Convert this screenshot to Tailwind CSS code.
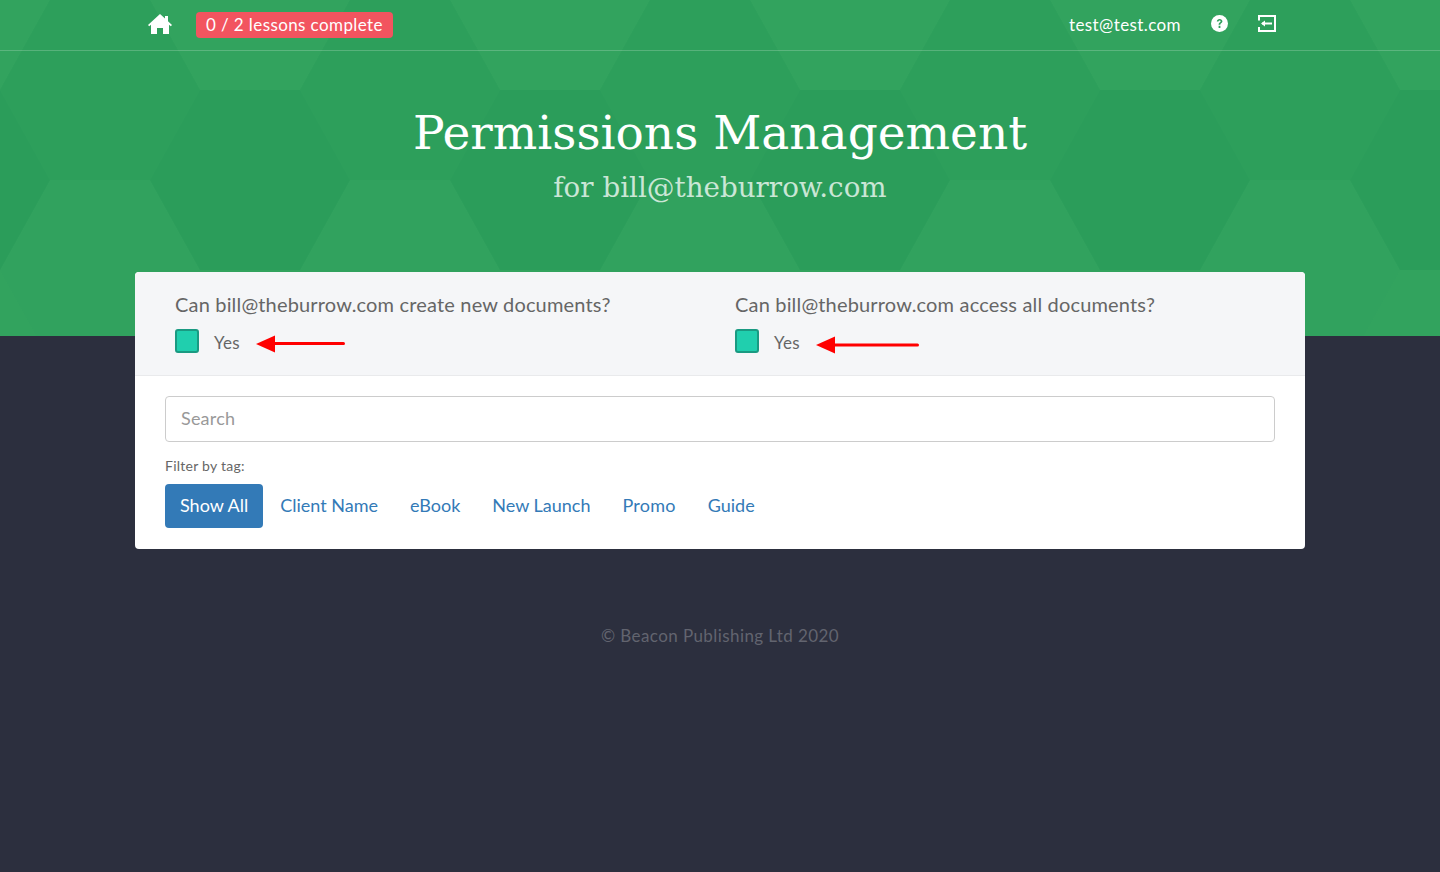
<!DOCTYPE html>
<html lang="en">
<head>
    <title>Permissions Management</title>
    <script src="https://cdn.jsdelivr.net/npm/@tailwindcss/browser@4"></script>
    <meta name="viewport" content="width=device-width, initial-scale=1.0">
</head>

<body class="bg-[#2c2f3e] min-h-screen font-['Lato','Noto_Sans',sans-serif] text-[#666]">
    <!-- hero with the hexagon background -->
    <div class="relative h-[336px] bg-[#2d9f5b] overflow-hidden">
        <svg class="absolute inset-0" width="1440" height="336" xmlns="http://www.w3.org/2000/svg">
            <defs>
                <polygon id="hex" points="-100,0 -50,-90 50,-90 100,0 50,90 -50,90"/>
                <pattern id="hexes" x="0" y="0" width="300" height="360" patternUnits="userSpaceOnUse">
                    <use href="#hex" x="250" y="0" fill="#32a35e"/>
                    <use href="#hex" x="-50" y="0" fill="#32a35e"/>
                    <use href="#hex" x="250" y="360" fill="#32a35e"/>
                    <use href="#hex" x="-50" y="360" fill="#32a35e"/>
                    <use href="#hex" x="100" y="270" fill="#31a25e"/>
                    <use href="#hex" x="100" y="90" fill="#2d9f5b"/>
                    <use href="#hex" x="250" y="180" fill="#2b9d5a"/>
                    <use href="#hex" x="-50" y="180" fill="#2b9d5a"/>
                </pattern>
            </defs>
            <rect width="1440" height="336" fill="url(#hexes)"/>
        </svg>

        <div class="relative">
            <div class="h-[51px] border-b border-white/20">
                <div class="w-[1170px] mx-auto h-full flex items-center pl-[13px] pr-[29px] text-white">
                    <svg class="mb-[2px]" width="24" height="20" viewBox="0 0 24 20" fill="#fff">
                        <path d="M12 0 L17 4.5 V2 H20 V7.2 L24 11 L22.8 12.2 L21 10.7 V20 H15 V14 H9 V20 H3 V10.7 L1.2 12.2 L0 11 Z"/>
                    </svg>
                    <div class="ml-6 h-[26px] px-[10px] rounded bg-[#f2545f] flex items-center text-[17px] tracking-[0.4px]">0 / 2 lessons complete</div>
                    <div class="ml-auto text-[17px] tracking-[0.4px]">test@test.com</div>
                    <svg class="ml-[30px] mb-[3px]" width="17" height="17" viewBox="0 0 17 17">
                        <circle cx="8.5" cy="8.5" r="8.5" fill="#fff"/>
                        <path d="M5.8 6.6 C5.9 4.8 7.1 3.9 8.6 3.9 C10.2 3.9 11.4 4.9 11.4 6.3 C11.4 7.4 10.7 8 9.9 8.5 C9.4 8.8 9.4 9.1 9.4 9.8 H7.6 C7.6 8.6 7.9 8 8.7 7.5 C9.3 7.1 9.6 6.9 9.6 6.4 C9.6 5.9 9.2 5.5 8.6 5.5 C8 5.5 7.6 5.9 7.5 6.6 Z M7.6 10.8 H9.4 V12.9 H7.6 Z" fill="#2f9f5c"/>
                    </svg>
                    <svg class="ml-[30px] mb-[3px]" width="18" height="17" viewBox="0 0 18 17" fill="none" stroke="#fff" stroke-width="2">
                        <path d="M1 5.5 V1 H17 V16 H1 V12"/>
                        <path d="M4 8.5 H14" />
                        <path d="M3 8.5 L7 5.5 V11.5 Z" fill="#fff" stroke="none"/>
                    </svg>
                </div>
            </div>

            <div class="text-center font-['DejaVu_Serif',serif]">
                <h1 class="mt-[51px] text-[47px] leading-[62px] text-white">Permissions Management</h1>
                <h2 class="mt-[6px] text-[27.75px] leading-[36px] text-white/75">for bill@theburrow.com</h2>
            </div>
        </div>
    </div>

    <!-- main card -->
    <div class="relative w-[1170px] mx-auto -mt-[64px] bg-white rounded overflow-hidden">
        <div class="h-[104px] bg-[#f5f6f8] border-b border-[#e9eaec] grid grid-cols-2 pl-10 pt-[19px]">
            <div>
                <p class="text-[20px] leading-[26px] tracking-[0.17px]">Can bill@theburrow.com create new documents?</p>
                <div class="mt-[12px] flex items-start">
                    <span class="w-6 h-6 rounded-[3px] bg-[#20cfae] border-2 border-[#1a9a82]"></span>
                    <span class="ml-[15px] mt-[2px] text-[17px] leading-6 tracking-[0.3px]">Yes</span>
                    <svg class="ml-[16px] mt-[6px]" width="89" height="18" viewBox="0 0 89 18">
                        <path d="M0 9 L19 0.5 V17.5 Z" fill="#f00"/>
                        <path d="M18 8.5 H87.5" stroke="#f00" stroke-width="3" stroke-linecap="round"/>
                    </svg>
                </div>
            </div>
            <div class="ml-[-5px]">
                <p class="text-[20px] leading-[26px] tracking-[0.17px]">Can bill@theburrow.com access all documents?</p>
                <div class="mt-[12px] flex items-start">
                    <span class="w-6 h-6 rounded-[3px] bg-[#20cfae] border-2 border-[#1a9a82]"></span>
                    <span class="ml-[15px] mt-[2px] text-[17px] leading-6 tracking-[0.3px]">Yes</span>
                    <svg class="ml-[16px] mt-[7px]" width="103" height="18" viewBox="0 0 103 18">
                        <path d="M0 9 L19 0.5 V17.5 Z" fill="#f00"/>
                        <path d="M18 9 H101.5" stroke="#f00" stroke-width="3" stroke-linecap="round"/>
                    </svg>
                </div>
            </div>
        </div>

        <div class="px-[30px] pt-5 pb-[21px]">
            <input type="text" placeholder="Search" class="block w-full h-[46px] px-[15px] pb-[2px] border border-[#ccc] rounded text-[18px] placeholder:text-[#999] tracking-[0.2px]">
            <div class="mt-[14px] text-[14px] leading-[20px] tracking-[0.25px]">Filter by tag:</div>
            <div class="mt-[8px] flex items-center gap-[2px] text-[18px] text-[#337ab7]">
                <a class="h-11 px-[15px] pb-[2px] flex items-center rounded bg-[#337ab7] text-white">Show All</a>
                <a class="h-11 px-[15px] pb-[2px] flex items-center">Client Name</a>
                <a class="h-11 px-[15px] pb-[2px] flex items-center">eBook</a>
                <a class="h-11 px-[15px] pb-[2px] flex items-center">New Launch</a>
                <a class="h-11 px-[15px] pb-[2px] flex items-center tracking-[0.25px]">Promo</a>
                <a class="h-11 px-[15px] pb-[2px] flex items-center">Guide</a>
            </div>
        </div>
    </div>

    <div class="mt-[75px] text-center text-[17px] leading-6 tracking-[0.42px] text-[#62646f]">© Beacon Publishing Ltd 2020</div>
</body>
</html>
